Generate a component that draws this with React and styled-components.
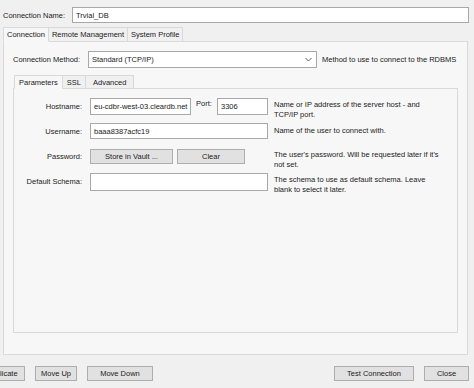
import React from "react";
import styled, { createGlobalStyle } from "styled-components";

const GlobalStyle = createGlobalStyle`
  html, body {
    margin: 0;
    padding: 0;
    background: #f0f0f0;
  }
  body {
    font-family: "Liberation Sans", Arial, sans-serif;
    font-size: 7.5px;
    color: #1b1b1b;
  }
`;

const Window = styled.div`
  width: 474px;
  height: 388px;
  overflow: hidden;
  background: #f0f0f0;
  display: flex;
  flex-direction: column;
`;

const NameRow = styled.div`
  display: flex;
  align-items: center;
  padding: 7px 5px 0 3px;
`;

const NameLabel = styled.span`
  width: 69px;
  flex-shrink: 0;
`;

const TextBox = styled.div`
  box-sizing: border-box;
  height: ${(p) => p.$h || 16}px;
  width: ${(p) => (p.$w ? `${p.$w}px` : "auto")};
  flex: ${(p) => (p.$w ? "0 0 auto" : "1")};
  background: #fff;
  border: 1px solid #a8a8a8;
  padding: 0 3px;
  display: flex;
  align-items: center;
  white-space: nowrap;
  overflow: hidden;
`;

const TabBar = styled.div`
  display: flex;
  align-items: flex-end;
  margin: ${(p) => p.$m};
  position: relative;
  z-index: 1;
`;

const Tab = styled.div`
  box-sizing: border-box;
  height: ${(p) => (p.$active ? p.$h + 1 : p.$h)}px;
  padding: 0 ${(p) => p.$pad}px;
  display: flex;
  align-items: center;
  border: 1px solid #d9d9d9;
  border-bottom: ${(p) => (p.$active ? "1px solid #f7f7f7" : "none")};
  border-left: ${(p) => (p.$first || p.$active ? "1px solid #d9d9d9" : "none")};
  background: ${(p) => (p.$active ? "#f7f7f7" : "#f0f0f0")};
  margin-bottom: ${(p) => (p.$active ? -1 : 0)}px;
  white-space: nowrap;
`;

const Panel = styled.div`
  box-sizing: border-box;
  background: #f7f7f7;
  border: 1px solid #d9d9d9;
  margin: ${(p) => p.$m};
  height: ${(p) => p.$h}px;
  display: flex;
  flex-direction: column;
`;

const MethodRow = styled.div`
  display: flex;
  align-items: center;
  padding: 9px 0 0 9px;
`;

const MethodLabel = styled.span`
  width: 75px;
  flex-shrink: 0;
`;

const Select = styled.div`
  box-sizing: border-box;
  width: 229px;
  height: 17px;
  background: #fff;
  border: 1px solid #a8a8a8;
  display: flex;
  align-items: center;
  justify-content: space-between;
  padding: 0 4px 0 3px;
`;

const Hint = styled.span`
  margin-left: 5px;
  line-height: 10px;
  white-space: nowrap;
`;

const Form = styled.div`
  display: grid;
  grid-template-columns: 68px 178px 1fr;
  column-gap: 8px;
  row-gap: 8px;
  padding: 9px 12px 0 0;
  grid-auto-rows: 17px;
`;

const FieldLabel = styled.span`
  text-align: right;
  line-height: 17px;
  white-space: nowrap;
`;

const FieldGroup = styled.div`
  display: flex;
  align-items: center;
  gap: ${(p) => p.$gap || 0}px;
`;

const PortLabel = styled.span`
  width: 22px;
  padding-left: 5px;
  align-self: flex-start;
  line-height: 12px;
`;

const FieldHint = styled.div`
  margin-left: -2px;
  line-height: 10px;
  padding-top: ${(p) => p.$pt || 2}px;
  white-space: nowrap;
`;

const Button = styled.div`
  box-sizing: border-box;
  width: ${(p) => p.$w}px;
  height: ${(p) => p.$h || 15}px;
  flex-shrink: 0;
  background: #e1e1e1;
  border: 1px solid #adadad;
  display: flex;
  align-items: center;
  justify-content: center;
  white-space: nowrap;
`;

const Footer = styled.div`
  display: flex;
  align-items: center;
  padding: 11px 5px 0 0;
  gap: 10px;
`;

const Spacer = styled.div`
  flex: 1;
`;

const Chevron = () => (
  <svg width="7" height="5" viewBox="0 0 7 5">
    <path d="M0.5 1 L3.5 4 L6.5 1" fill="none" stroke="#555" strokeWidth="0.9" />
  </svg>
);

export default function App() {
  return (
    <Window>
      <GlobalStyle />
      <NameRow>
        <NameLabel>Connection Name:</NameLabel>
        <TextBox>Trvial_DB</TextBox>
      </NameRow>

      <TabBar $m="4px 0 0 3px">
        <Tab $active $first $h={14} $pad={3}>Connection</Tab>
        <Tab $h={14} $pad={3}>Remote Management</Tab>
        <Tab $h={14} $pad={3}>System Profile</Tab>
      </TabBar>

      <Panel $m="0 6px 0 3px" $h={314}>
        <MethodRow>
          <MethodLabel>Connection Method:</MethodLabel>
          <Select>
            <span>Standard (TCP/IP)</span>
            <Chevron />
          </Select>
          <Hint>Method to use to connect to the RDBMS</Hint>
        </MethodRow>

        <TabBar $m="7px 0 0 10px">
          <Tab $active $first $h={13} $pad={4}>Parameters</Tab>
          <Tab $h={13} $pad={4}>SSL</Tab>
          <Tab $h={13} $pad={7}>Advanced</Tab>
        </TabBar>

        <Panel $m="0 9px 0 9px" $h={245}>
          <Form>
            <FieldLabel>Hostname:</FieldLabel>
            <FieldGroup>
              <TextBox $w={101} $h={17}>eu-cdbr-west-03.cleardb.net</TextBox>
              <PortLabel>Port:</PortLabel>
              <TextBox $w={51} $h={17}>3306</TextBox>
            </FieldGroup>
            <FieldHint $pt={2}>
              Name or IP address of the server host - and
              <br />
              TCP/IP port.
            </FieldHint>

            <FieldLabel>Username:</FieldLabel>
            <TextBox $h={16}>baaa8387acfc19</TextBox>
            <FieldHint $pt={3}>Name of the user to connect with.</FieldHint>

            <FieldLabel>Password:</FieldLabel>
            <FieldGroup $gap={4}>
              <Button $w={83}>Store in Vault ...</Button>
              <Button $w={68}>Clear</Button>
            </FieldGroup>
            <FieldHint $pt={2}>
              The user's password. Will be requested later if it's
              <br />
              not set.
            </FieldHint>

            <FieldLabel>Default Schema:</FieldLabel>
            <TextBox $h={18}></TextBox>
            <FieldHint $pt={2}>
              The schema to use as default schema. Leave
              <br />
              blank to select it later.
            </FieldHint>
          </Form>
        </Panel>
      </Panel>

      <Footer>
        <Button $w={46} style={{ marginLeft: -21 }}>Duplicate</Button>
        <Button $w={42}>Move Up</Button>
        <Button $w={66}>Move Down</Button>
        <Spacer />
        <Button $w={80}>Test Connection</Button>
        <Button $w={45}>Close</Button>
      </Footer>
    </Window>
  );
}
